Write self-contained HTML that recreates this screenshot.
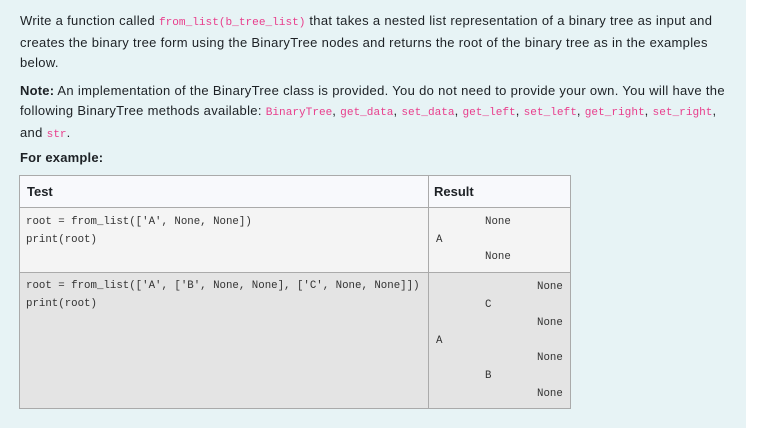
<!DOCTYPE html>
<html><head><style>
body{margin:0;width:760px;height:428px;background:#fff;font-family:"Liberation Sans",sans-serif;color:#1d2125;overflow:hidden}
.box{position:absolute;left:0;top:0;width:746px;height:428px;background:#e7f3f5}
p{position:absolute;left:20px;margin:0;font-size:13px;line-height:20px;width:720px;letter-spacing:0.32px}
p b{letter-spacing:0.2px}
code{font-family:"Liberation Mono",monospace;font-size:11.1px;color:#e83e8c;letter-spacing:0}
.t{position:absolute;left:19px;top:175px;width:550px;height:232px;border:1px solid #aaa;}
.m{position:absolute;font-family:"Liberation Mono",monospace;font-size:10.75px;color:#333;white-space:pre;line-height:17.8px}
.r{position:absolute;font-family:"Liberation Mono",monospace;font-size:10.75px;color:#333;line-height:14px}
.h{position:absolute;font-weight:bold;font-size:13px}
</style></head><body>
<div class="box"></div>
<p style="top:11px">Write a function called <code>from_list(b_tree_list)</code> that takes a nested list representation of a binary tree as input and creates the binary tree form using the BinaryTree nodes and returns the root of the binary tree as in the examples below.</p>
<p style="top:81px"><b>Note:</b> An implementation of the BinaryTree class is provided. You do not need to provide your own. You will have the following BinaryTree methods available: <code>BinaryTree</code>, <code>get_data</code>, <code>set_data</code>, <code>get_left</code>, <code>set_left</code>, <code>get_right</code>, <code>set_right</code>, and <code>str</code>.</p>
<p style="top:148px;letter-spacing:0.2px"><b>For example:</b></p>
<div class="t">
<div style="position:absolute;left:0;top:0;width:550px;height:31px;background:#f8f9fc;border-bottom:1px solid #aaa"></div>
<div style="position:absolute;left:0;top:32px;width:550px;height:64px;background:#f4f4f4;border-bottom:1px solid #aaa"></div>
<div style="position:absolute;left:0;top:97px;width:550px;height:135px;background:#e4e4e4"></div>
<div style="position:absolute;left:408px;top:0;width:1px;height:232px;background:#aaa"></div>
<div class="h" style="left:7px;top:8px">Test</div>
<div class="h" style="left:414px;top:8px">Result</div>
<div class="m" style="left:6px;top:38px">root = from_list(['A', None, None])
print(root)</div>
<div class="m" style="left:6px;top:102px">root = from_list(['A', ['B', None, None], ['C', None, None]])
print(root)</div>
<div class="r" style="left:465px;top:39px">None</div>
<div class="r" style="left:416px;top:57px">A</div>
<div class="r" style="left:465px;top:74px">None</div>
<div class="r" style="left:517px;top:104px">None</div>
<div class="r" style="left:465px;top:122px">C</div>
<div class="r" style="left:517px;top:140px">None</div>
<div class="r" style="left:416px;top:158px">A</div>
<div class="r" style="left:517px;top:175px">None</div>
<div class="r" style="left:465px;top:193px">B</div>
<div class="r" style="left:517px;top:211px">None</div>
</div>
</body></html>
